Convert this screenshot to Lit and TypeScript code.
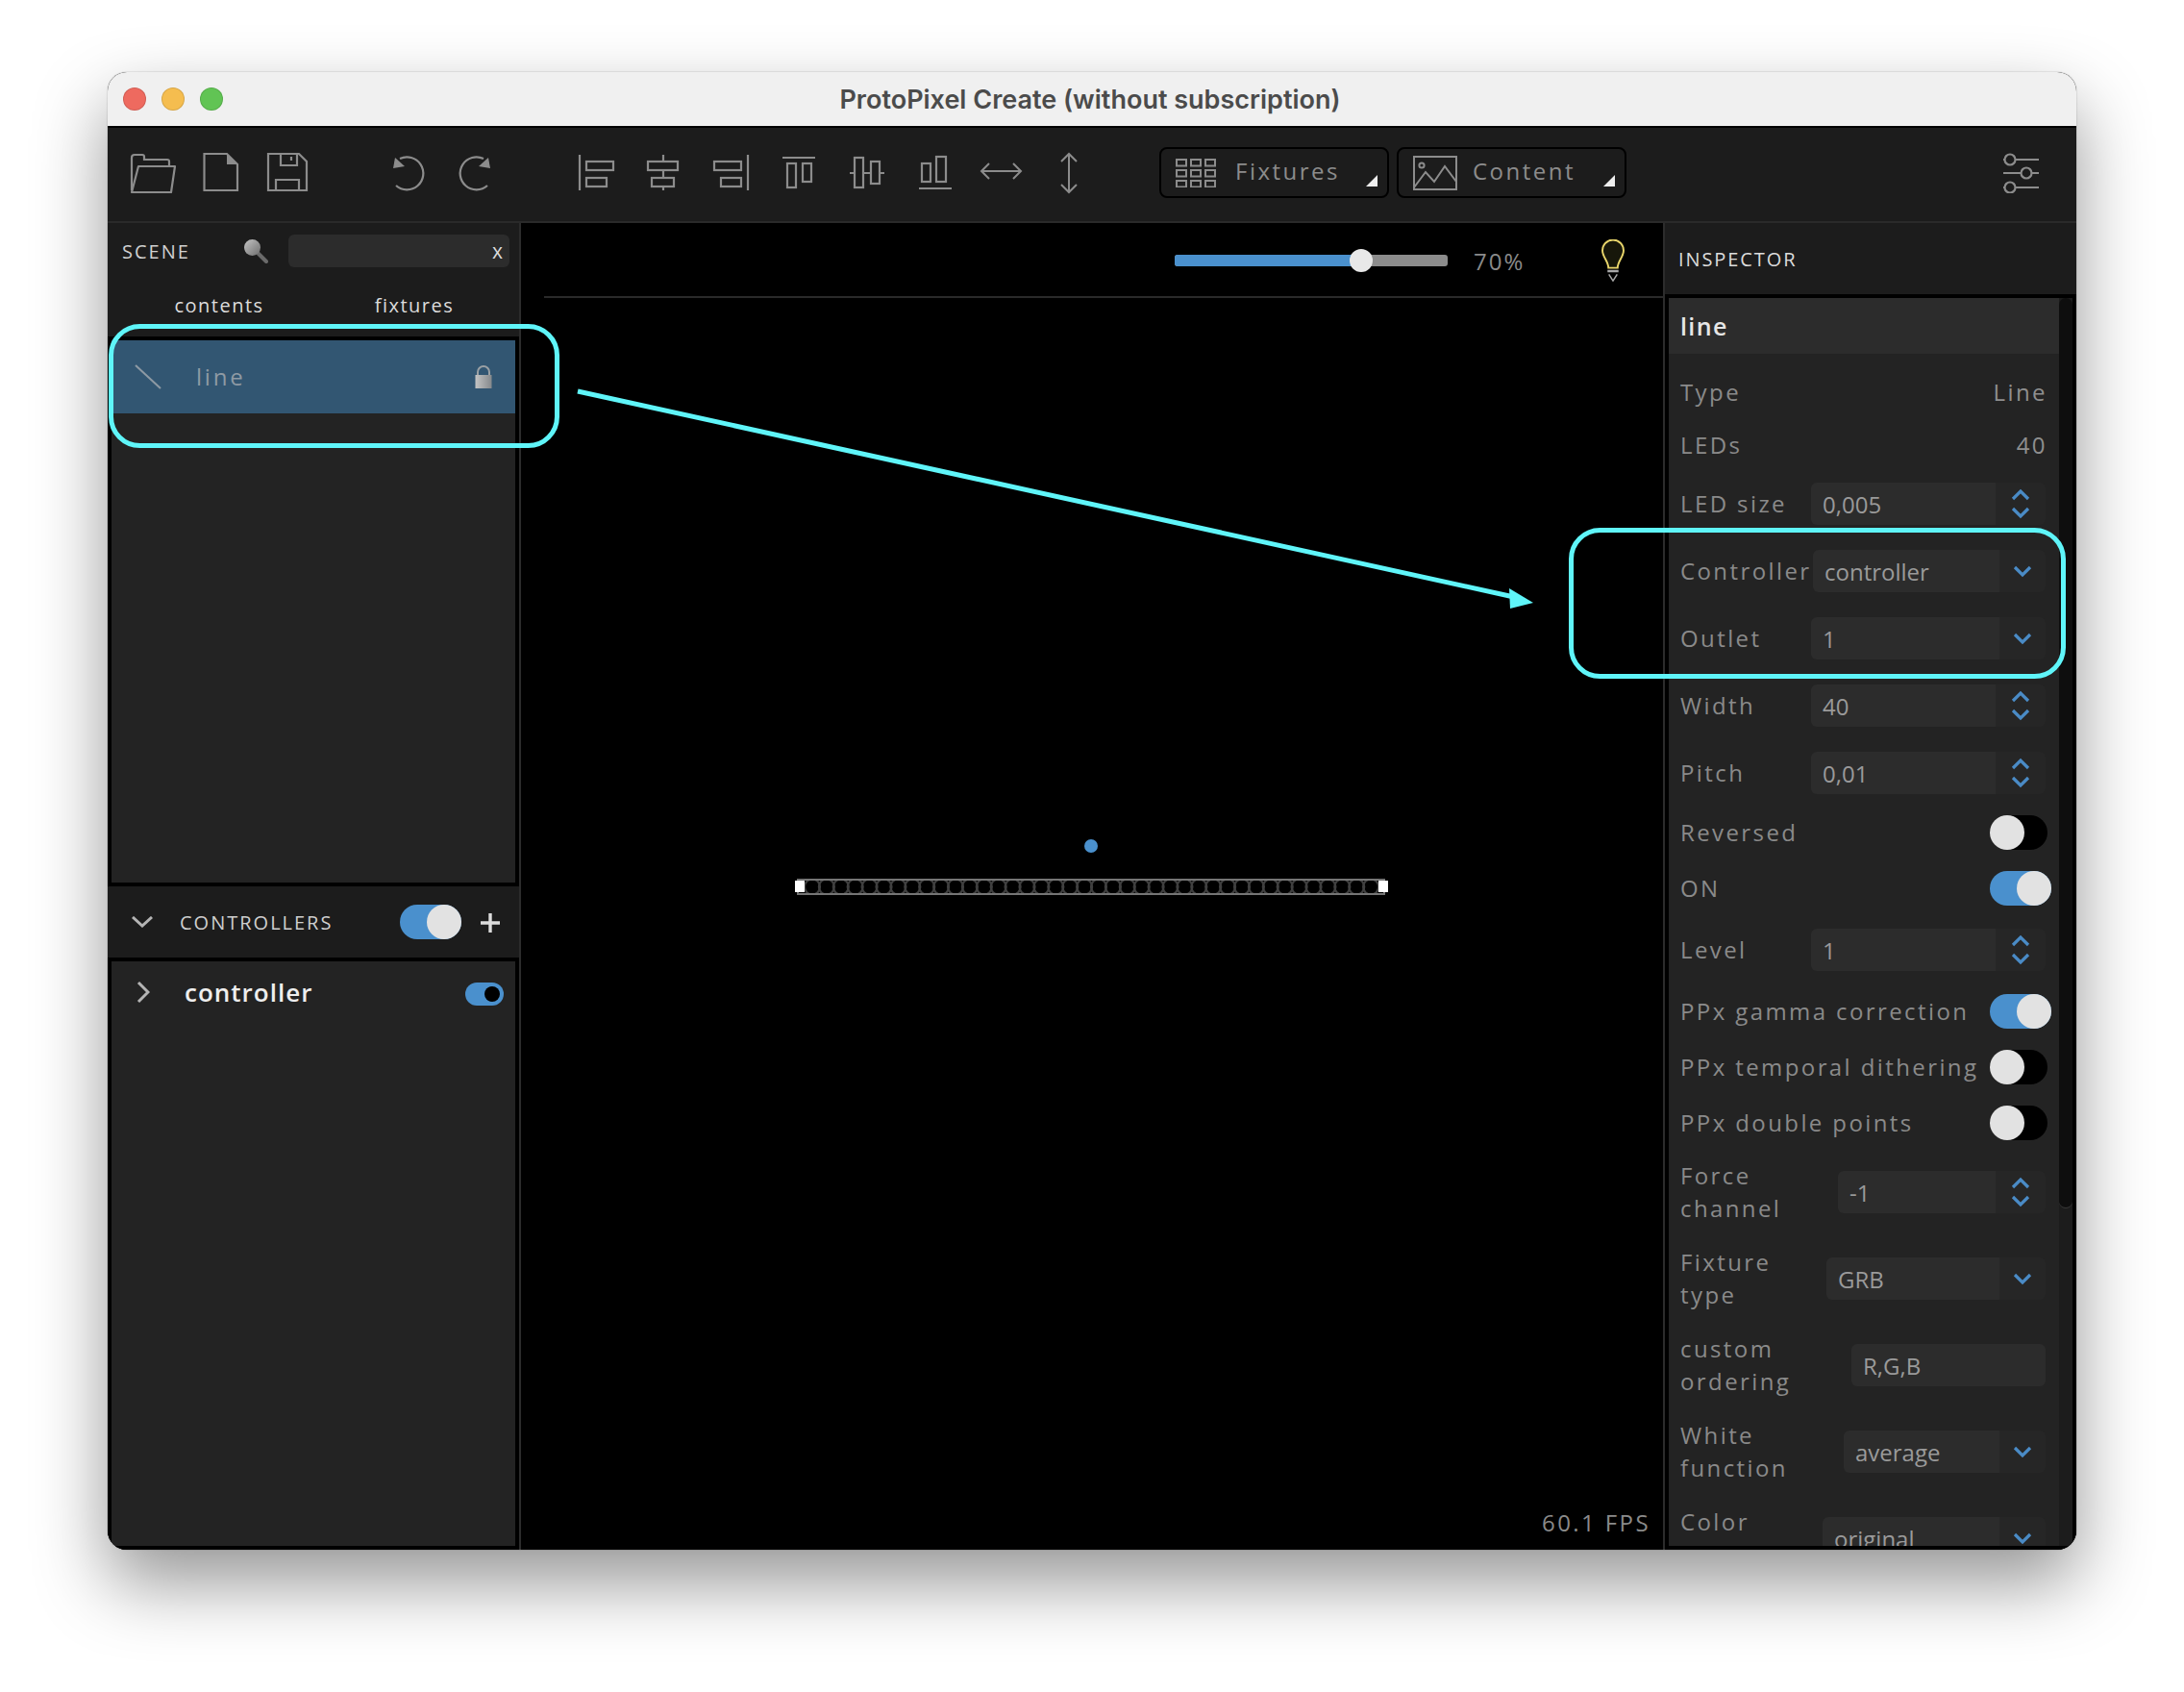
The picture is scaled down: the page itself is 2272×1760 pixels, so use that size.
import { LitElement, html, svg, css, nothing } from "lit";
import { customElement } from "lit/decorators.js";

type Row =
  | { kind: "text"; label: string; value: string }
  | { kind: "spin" | "select" | "input"; label: string; value: string; width: number; tall?: boolean; tight?: boolean }
  | { kind: "toggle"; label: string; on: boolean; tight?: boolean };

const rows: Row[] = [
  { kind: "text", label: "Type", value: "Line" },
  { kind: "text", label: "LEDs", value: "40" },
  { kind: "spin", label: "LED size", value: "0,005", width: 244, tight: true },
  { kind: "select", label: "Controller", value: "controller", width: 242 },
  { kind: "select", label: "Outlet", value: "1", width: 244 },
  { kind: "spin", label: "Width", value: "40", width: 244 },
  { kind: "spin", label: "Pitch", value: "0,01", width: 244 },
  { kind: "toggle", label: "Reversed", on: false, tight: true },
  { kind: "toggle", label: "ON", on: true },
  { kind: "spin", label: "Level", value: "1", width: 244 },
  { kind: "toggle", label: "PPx gamma correction", on: true },
  { kind: "toggle", label: "PPx temporal dithering", on: false },
  { kind: "toggle", label: "PPx double points", on: false },
  { kind: "spin", label: "Force channel", value: "-1", width: 216, tall: true, tight: true },
  { kind: "select", label: "Fixture type", value: "GRB", width: 228, tall: true },
  { kind: "input", label: "custom ordering", value: "R,G,B", width: 202, tall: true },
  { kind: "select", label: "White function", value: "average", width: 210, tall: true },
  { kind: "select", label: "Color order", value: "original", width: 232, tall: true },
];

const chevron = (dir: "up" | "down") => html`
  <svg class="chev" width="20" height="13" viewBox="0 0 20 13">
    <path d=${dir === "up" ? "M2 11L10 3L18 11" : "M2 2L10 10L18 2"} fill="none" stroke="#4a8bc6" stroke-width="3.2" />
  </svg>
`;

// toolbar icons share a 48 box, only the strokes differ
const icon = (body: unknown) => html`
  <svg class="tool" width="48" height="48" viewBox="0 0 48 48" fill="none" stroke="#8c8c8c" stroke-width="2.2">${body}</svg>
`;

const undoBody = svg`
  <path d="M11 37A17 17 0 1 0 15 9" />
  <path d="M10 8L8 19L20 17Z" fill="#8c8c8c" stroke="none" />
`;

const tools = {
  folder: svg`
    <path d="M2 42V8Q2 5 5 5H13Q15 5 15 7V10H39Q41 10 41 12V16" />
    <path d="M9 17H47L43 44H2Z" stroke-linejoin="round" />
  `,
  file: svg`
    <path d="M7.5 4H31L42 15V42H7.5Z" />
    <path d="M31 4L42 15H31Z" fill="#8c8c8c" stroke="none" />
  `,
  save: svg`
    <path d="M4 4H36L44 12V42H4Z" />
    <path d="M17 4V16H34V4M28 7V11M12 42V31H36V42" />
  `,
  undo: undoBody,
  redo: svg`<g transform="translate(47 0) scale(-1 1)">${undoBody}</g>`,
  alignLeft: svg`
    <path d="M6 5V42" />
    <rect x="13" y="12" width="28" height="9" />
    <rect x="13" y="29" width="21" height="9" />
  `,
  alignCenter: svg`
    <path d="M23 5V12M23 21V29M23 38V42" />
    <rect x="7" y="12" width="31" height="9" />
    <rect x="11" y="29" width="23" height="9" />
  `,
  alignRight: svg`
    <path d="M41 5V42" />
    <rect x="6" y="12" width="28" height="9" />
    <rect x="13" y="29" width="21" height="9" />
  `,
  alignTop: svg`
    <path d="M7 8H41" />
    <rect x="12" y="14" width="9" height="25" />
    <rect x="28" y="14" width="9" height="19" />
  `,
  alignMiddle: svg`
    <path d="M7 24H12M21 24H29M38 24H43" />
    <rect x="12" y="8" width="9" height="31" />
    <rect x="29" y="12" width="9" height="23" />
  `,
  alignBottom: svg`
    <path d="M9 40H43" />
    <rect x="12" y="14" width="9" height="19" />
    <rect x="27" y="7" width="10" height="26" />
  `,
  hArrow: svg`<path d="M4 22H45M12 14L4 22L12 30M37 14L45 22L37 30" stroke-width="2" />`,
  vArrow: svg`<path d="M25 4V44M17 12L25 4L33 12M17 36L25 44L33 36" stroke-width="2" />`,
};

const gridIcon = html`
  <svg class="drop-icon" width="42" height="30" viewBox="0 0 42 30" fill="none" stroke="#8c8c8c" stroke-width="2">
    ${[1, 12, 23].map((y) =>
      [1, 16, 31].map((x) => svg`<rect x=${x} y=${y} width="10" height="6.5" />`)
    )}
  </svg>
`;

const pictureIcon = html`
  <svg class="drop-icon" width="46" height="36" viewBox="0 0 46 36" fill="none" stroke="#8c8c8c" stroke-width="2">
    <rect x="1" y="1" width="44" height="34" />
    <circle cx="9" cy="10" r="2.6" />
    <path d="M1 33L13 17L22 27L33 11L45 27" />
  </svg>
`;

@customElement("app-root")
export class AppRoot extends LitElement {
  static override styles = css`
    :host {
      display: block;
      position: relative;
      width: 2272px;
      height: 1760px;
      padding: 75px 112px 148px;
      box-sizing: border-box;
      background: #fff;
      font-family: "Open Sans", "Noto Sans", sans-serif;
    }

    .window {
      height: 1537px;
      display: flex;
      flex-direction: column;
      border-radius: 20px;
      overflow: hidden;
      background: #000;
      box-shadow: 0 34px 76px rgba(0, 0, 0, 0.42), 0 0 1.5px rgba(0, 0, 0, 0.4);
    }

    .titlebar {
      position: relative;
      flex: none;
      height: 58px;
      box-sizing: border-box;
      display: flex;
      align-items: center;
      justify-content: center;
      padding-right: 4px;
      background: #f0f0f0;
      border-bottom: 2px solid #000;
      font-family: Inter, "Liberation Sans", sans-serif;
      font-size: 27px;
      font-weight: 600;
      color: #4b4b4b;
    }

    .lights {
      position: absolute;
      left: 16px;
      top: 16px;
      display: flex;
      gap: 16px;
    }

    .lights i {
      width: 24px;
      height: 24px;
      box-sizing: border-box;
      border-radius: 50%;
      border: 1px solid rgba(0, 0, 0, 0.12);
    }

    .toolbar {
      flex: none;
      height: 99px;
      box-sizing: border-box;
      display: flex;
      align-items: center;
      padding: 0 38px 4px 12px;
      background: #1c1c1c;
      border-bottom: 2px solid #2a2a2a;
    }

    .tool-group {
      display: flex;
    }

    .tool-slot {
      width: 70px;
      height: 48px;
      display: flex;
      justify-content: center;
    }

    .drop {
      position: relative;
      width: 239px;
      height: 53px;
      box-sizing: border-box;
      display: flex;
      align-items: center;
      gap: 20px;
      padding: 0 0 5px 15px;
      background: #1c1c1c;
      border: 2px solid #000;
      border-radius: 8px;
      color: #8c8c8c;
      font-size: 24px;
      letter-spacing: 2.5px;
    }

    .drop + .drop {
      margin-left: 8px;
      gap: 16px;
    }

    .drop svg {
      margin-top: 5px;
    }

    .drop::after {
      content: "";
      position: absolute;
      right: 10px;
      bottom: 10px;
      width: 0;
      height: 0;
      border-left: 12px solid transparent;
      border-bottom: 12px solid #eee;
    }

    .settings {
      margin-left: auto;
    }

    .main {
      flex: 1;
      min-height: 0;
      display: flex;
    }

    /* left column */
    .left {
      flex: none;
      width: 430px;
      box-sizing: border-box;
      display: flex;
      flex-direction: column;
      background: #1c1c1c;
      border-right: 2px solid #2c2c2c;
    }

    .scene-head {
      flex: none;
      height: 118px;
      box-sizing: border-box;
      padding-top: 12px;
    }

    .scene-line {
      display: flex;
      align-items: center;
      height: 34px;
      padding-left: 15px;
    }

    .scene-title {
      width: 126px;
      font-size: 20px;
      letter-spacing: 2px;
      color: #d0d0d0;
    }

    .search-box {
      width: 230px;
      height: 34px;
      box-sizing: border-box;
      margin-left: 21px;
      padding-right: 7px;
      display: flex;
      align-items: center;
      justify-content: flex-end;
      background: #2c2c2c;
      border-radius: 6px;
      font-size: 21px;
      color: #ddd;
    }

    .tabs {
      display: grid;
      grid-template-columns: 232px 174px;
      margin-top: 26px;
      font-size: 20px;
      line-height: 28px;
      letter-spacing: 1.5px;
      color: #dcdcdc;
      text-align: center;
    }

    .list {
      box-sizing: border-box;
      background: #232323;
      border: 4px solid #000;
    }

    .scene-list {
      flex: none;
      height: 572px;
    }

    .scene-row {
      display: flex;
      align-items: center;
      height: 76px;
      padding-left: 24px;
      padding-right: 24px;
      background: #325672;
      color: #8e9aa4;
      font-size: 24px;
      letter-spacing: 2.8px;
    }

    .scene-row .name {
      margin-left: 36px;
      margin-bottom: 2px;
    }

    .scene-row .lock {
      margin-left: auto;
    }

    .ctrl-head {
      flex: none;
      height: 74px;
      display: flex;
      align-items: center;
      padding-left: 25px;
      font-size: 20px;
      letter-spacing: 2px;
      color: #cfcfcf;
    }

    .ctrl-head .name {
      margin-left: 28px;
      width: 229px;
    }

    .ctrl-head .plus {
      margin: 2px 0 0 20px;
    }

    .ctrl-list {
      flex: 1;
      padding: 15px 12px 0 26px;
    }

    .ctrl-row {
      display: flex;
      align-items: center;
      height: 34px;
      font-size: 26px;
      font-weight: 600;
      letter-spacing: 1px;
      color: #eee;
    }

    .ctrl-row .name {
      margin-left: 36px;
    }

    .mini {
      position: relative;
      margin: 4px 0 0 auto;
      width: 40px;
      height: 24px;
      border-radius: 12px;
      background: #4a90cd;
    }

    .mini::after {
      content: "";
      position: absolute;
      right: 4px;
      top: 4px;
      width: 16px;
      height: 16px;
      border-radius: 50%;
      background: #000;
    }

    /* toggles */
    .toggle {
      position: relative;
      flex: none;
      width: 60px;
      height: 36px;
      border-radius: 18px;
      background: #000;
      margin-right: -2px;
    }

    .toggle.on {
      width: 64px;
      background: #4a90cd;
      margin-right: -6px;
    }

    .toggle::after {
      content: "";
      position: absolute;
      left: 0;
      top: 0;
      width: 36px;
      height: 36px;
      border-radius: 50%;
      background: #e2e2e2;
    }

    .toggle.on::after {
      left: 28px;
    }

    /* canvas */
    .canvas {
      position: relative;
      flex: 1;
      min-width: 0;
      display: flex;
      flex-direction: column;
      background: #000;
      border-right: 2px solid #2c2c2c;
    }

    .canvas-head {
      flex: none;
      height: 78px;
      box-sizing: border-box;
      margin-left: 24px;
      padding: 17px 39px 0 0;
      display: flex;
      align-items: flex-start;
      justify-content: flex-end;
      border-bottom: 2px solid #2a2a2a;
    }

    .slider {
      position: relative;
      width: 284px;
      height: 12px;
      margin-top: 16px;
      border-radius: 3px;
      background: #8c8c8c;
    }

    .slider .fill {
      position: absolute;
      left: 0;
      top: 0;
      bottom: 0;
      border-radius: 3px 0 0 3px;
      background: #4a90cd;
    }

    .slider .knob {
      position: absolute;
      top: -6px;
      width: 24px;
      height: 24px;
      margin-left: -12px;
      border-radius: 50%;
      background: #e8e8e8;
    }

    .percent {
      width: 132px;
      margin-left: 27px;
      line-height: 46px;
      font-size: 24px;
      letter-spacing: 2px;
      color: #8a8a8a;
    }

    .strip {
      position: absolute;
      left: 278px;
      top: 633px;
    }

    .fps {
      position: absolute;
      right: 13px;
      bottom: 12px;
      font-size: 24px;
      letter-spacing: 2.4px;
      color: #8a8a8a;
    }

    /* inspector */
    .inspector {
      flex: none;
      width: 428px;
      display: flex;
      flex-direction: column;
      background: #1c1c1c;
    }

    .inspector-head {
      flex: none;
      height: 74px;
      padding: 21px 0 0 14px;
      box-sizing: border-box;
      font-size: 20px;
      line-height: 34px;
      letter-spacing: 1.9px;
      color: #dcdcdc;
    }

    .inspector-body {
      flex: 1;
      min-height: 0;
      display: flex;
      background: #000;
      padding: 4px 4px 4px 4px;
    }

    .props {
      width: 406px;
      overflow: hidden;
      background: #232323;
    }

    .props-title {
      height: 58px;
      padding-left: 12px;
      background: #2c2c2c;
      font-size: 25px;
      font-weight: 600;
      line-height: 58px;
      letter-spacing: 1.4px;
      color: #e6e6e6;
    }

    .prop-list {
      padding: 12px 14px 0 12px;
    }

    .row {
      display: flex;
      align-items: center;
      justify-content: space-between;
      height: 70px;
      font-size: 24px;
      line-height: 34px;
      letter-spacing: 2.4px;
      color: #8a8a8a;
    }

    .row.text {
      height: 55px;
    }

    .row.toggle-row {
      height: 58px;
    }

    .row.tall {
      height: 90px;
    }

    .row.tight {
      margin-top: -1px;
    }

    .row.toggle-row.tight,
    .row.tall.tight {
      margin-top: -2px;
    }

    .row .label {
      flex: 1;
      min-width: 0;
    }

    .row .value {
      letter-spacing: 2.4px;
      margin-right: -2px;
      color: #8f8f8f;
    }

    .box {
      flex: none;
      display: flex;
      height: 44px;
      margin-left: 4px;
      border-radius: 6px;
      overflow: hidden;
      background: #262626;
      font-size: 24px;
      letter-spacing: 0;
      color: #9a9a9a;
    }

    .box .main-part {
      flex: 1;
      min-width: 0;
      box-sizing: border-box;
      padding-left: 12px;
      line-height: 46px;
      background: #2c2c2c;
    }

    .box .side {
      flex: none;
      width: 48px;
      display: flex;
      align-items: center;
      justify-content: center;
      box-sizing: border-box;
    }

    .box.spin .side {
      width: 50px;
      margin-left: 2px;
      flex-direction: column;
      gap: 6px;
      padding-right: 2px;
    }

    .scrollbar {
      flex: none;
      width: 14px;
      background: #1c1c1c;
    }

    .scrollbar .thumb {
      height: 947px;
      box-sizing: border-box;
      border-radius: 8px;
      background: #0e0e0e;
      border-bottom: 1px solid #3a3a3a;
    }

    /* annotation layer */
    .marks {
      position: absolute;
      left: 0;
      top: 0;
      pointer-events: none;
    }
  `;

  private renderRow(r: Row) {
    if (r.kind === "text") {
      return html`
        <div class="row text">
          <span class="label">${r.label}</span>
          <span class="value">${r.value}</span>
        </div>
      `;
    }
    if (r.kind === "toggle") {
      return html`
        <div class="row toggle-row ${r.tight ? "tight" : ""}">
          <span class="label">${r.label}</span>
          <span class="toggle ${r.on ? "on" : ""}"></span>
        </div>
      `;
    }
    return html`
      <div class="row ${r.tall ? "tall" : ""} ${r.tight ? "tight" : ""}">
        <span class="label">${r.label}</span>
        <div class="box ${r.kind}" style="width:${r.width}px">
          <span class="main-part">${r.value}</span>
          ${r.kind === "spin"
            ? html`<span class="side">${chevron("up")}${chevron("down")}</span>`
            : r.kind === "select"
              ? html`<span class="side">${chevron("down")}</span>`
              : nothing}
        </div>
      </div>
    `;
  }

  private renderToolbar() {
    const slot = (body: unknown) => html`<span class="tool-slot">${icon(body)}</span>`;
    return html`
      <div class="toolbar">
        <div class="tool-group">${slot(tools.folder)}${slot(tools.file)}${slot(tools.save)}</div>
        <div class="tool-group" style="margin-left:56px">${slot(tools.undo)}${slot(tools.redo)}</div>
        <div class="tool-group" style="margin-left:56px">
          ${slot(tools.alignLeft)}${slot(tools.alignCenter)}${slot(tools.alignRight)}${slot(tools.alignTop)}
          ${slot(tools.alignMiddle)}${slot(tools.alignBottom)}${slot(tools.hArrow)}${slot(tools.vArrow)}
        </div>
        <div class="drop" style="margin-left:60px">${gridIcon}Fixtures</div>
        <div class="drop">${pictureIcon}Content</div>
        <svg class="settings" width="40" height="42" viewBox="0 0 40 42" fill="none" stroke="#8c8c8c" stroke-width="2.2">
          <path d="M2 7H3M15 7H39M2 21H20M32 21H39M2 36H3M15 36H39" />
          <circle cx="9" cy="7" r="5.5" />
          <circle cx="26" cy="21" r="5.5" />
          <circle cx="9" cy="36" r="5.5" />
        </svg>
      </div>
    `;
  }

  override render() {
    const level = 0.683;
    return html`
      <div class="window">
        <div class="titlebar">
          <div class="lights">
            <i style="background:#ee6a5f"></i>
            <i style="background:#f5bd4f"></i>
            <i style="background:#61c454"></i>
          </div>
          ProtoPixel Create (without subscription)
        </div>
        ${this.renderToolbar()}
        <div class="main">
          <div class="left">
            <div class="scene-head">
              <div class="scene-line">
                <span class="scene-title">SCENE</span>
                <svg width="26" height="26" viewBox="0 0 26 26">
                  <defs>
                    <linearGradient id="lens" x1="0" y1="0" x2="1" y2="1">
                      <stop offset="0" stop-color="#c4c4c4" />
                      <stop offset="1" stop-color="#6e6e6e" />
                    </linearGradient>
                  </defs>
                  <path d="M15 15L24 24" stroke="#6a6a6a" stroke-width="4" stroke-linecap="round" />
                  <circle cx="9.5" cy="9.5" r="8.5" fill="url(#lens)" />
                </svg>
                <div class="search-box">x</div>
              </div>
              <div class="tabs"><span>contents</span><span>fixtures</span></div>
            </div>
            <div class="list scene-list">
              <div class="scene-row">
                <svg width="28" height="26" viewBox="0 0 28 26">
                  <path d="M1 1L27 25" stroke="#8e9aa4" stroke-width="2" />
                </svg>
                <span class="name">line</span>
                <svg class="lock" width="18" height="24" viewBox="0 0 18 24">
                  <defs>
                    <linearGradient id="lock" x1="0" y1="0" x2="1" y2="0">
                      <stop offset="0" stop-color="#c4c4c4" />
                      <stop offset="1" stop-color="#85898c" />
                    </linearGradient>
                  </defs>
                  <path d="M3 11V7A6 6 0 0 1 15 7V11" fill="none" stroke="#9aa0a4" stroke-width="2" />
                  <rect x="0.5" y="10" width="17" height="14" fill="url(#lock)" />
                </svg>
              </div>
            </div>
            <div class="ctrl-head">
              <svg width="22" height="12" viewBox="0 0 22 12">
                <path d="M1 1L11 10L21 1" fill="none" stroke="#b4b4b4" stroke-width="3" />
              </svg>
              <span class="name">CONTROLLERS</span>
              <span class="toggle on" style="margin-right:0"></span>
              <svg class="plus" width="20" height="20" viewBox="0 0 20 20">
                <path d="M10 0V20M0 10H20" stroke="#dcdcdc" stroke-width="3.4" />
              </svg>
            </div>
            <div class="list ctrl-list">
              <div class="ctrl-row">
                <svg width="14" height="24" viewBox="0 0 14 24">
                  <path d="M2 2L12 12L2 22" fill="none" stroke="#b4b4b4" stroke-width="3" />
                </svg>
                <span class="name">controller</span>
                <span class="mini"></span>
              </div>
            </div>
          </div>

          <div class="canvas">
            <div class="canvas-head">
              <div class="slider">
                <span class="fill" style="width:${level * 100}%"></span>
                <span class="knob" style="left:${level * 100}%"></span>
              </div>
              <span class="percent">70%</span>
              <svg width="26" height="44" viewBox="0 0 26 46" fill="none">
                <path
                  d="M8 31C8 24 1.500 19 1.500 12A11.500 11.500 0 0 1 24.500 12C24.500 19 18 24 18 31Z"
                  fill="#17170a"
                  stroke="#e9d66b"
                  stroke-width="2"
                />
                <path d="M7 34.500H19" stroke="#a8a8a8" stroke-width="2.600" />
                <path d="M8.500 38L13 45L17.500 38" stroke="#a8a8a8" stroke-width="1.600" />
              </svg>
            </div>
            <svg class="strip" width="640" height="80" viewBox="0 0 640 80">
              <circle cx="315" cy="15" r="7" fill="#4a90cd" />
              <rect x="10" y="50" width="610" height="15" fill="#000" />
              ${Array.from(
                { length: 40 },
                (_, i) => svg`<circle cx=${25 + i * 14.9} cy="57.500" r="8" fill="none" stroke="#404040" stroke-width="2.2" />`
              )}
              <path d="M5 49H625M5 66H625" stroke="#000" stroke-width="2" />
              <rect x="10" y="50" width="610" height="15" fill="none" stroke="#757575" stroke-width="2" />
              <rect x="7" y="51" width="10" height="12" fill="#fff" />
              <rect x="614" y="51" width="10" height="12" fill="#fff" />
            </svg>
            <span class="fps">60.1 FPS</span>
          </div>

          <div class="inspector">
            <div class="inspector-head">INSPECTOR</div>
            <div class="inspector-body">
              <div class="props">
                <div class="props-title">line</div>
                <div class="prop-list">${rows.map((r) => this.renderRow(r))}</div>
              </div>
              <div class="scrollbar"><div class="thumb"></div></div>
            </div>
          </div>
        </div>
      </div>

      <svg class="marks" width="2272" height="1760" viewBox="0 0 2272 1760" fill="none" stroke="#5ff5f9" stroke-width="5">
        <rect x="115.500" y="339.500" width="464" height="124" rx="30" />
        <rect x="1634.500" y="551.500" width="512" height="152" rx="30" />
        <path d="M601 407L1575 621" />
        <path d="M1570 612L1595 627L1571 633Z" fill="#5ff5f9" stroke="none" />
      </svg>
    `;
  }
}
